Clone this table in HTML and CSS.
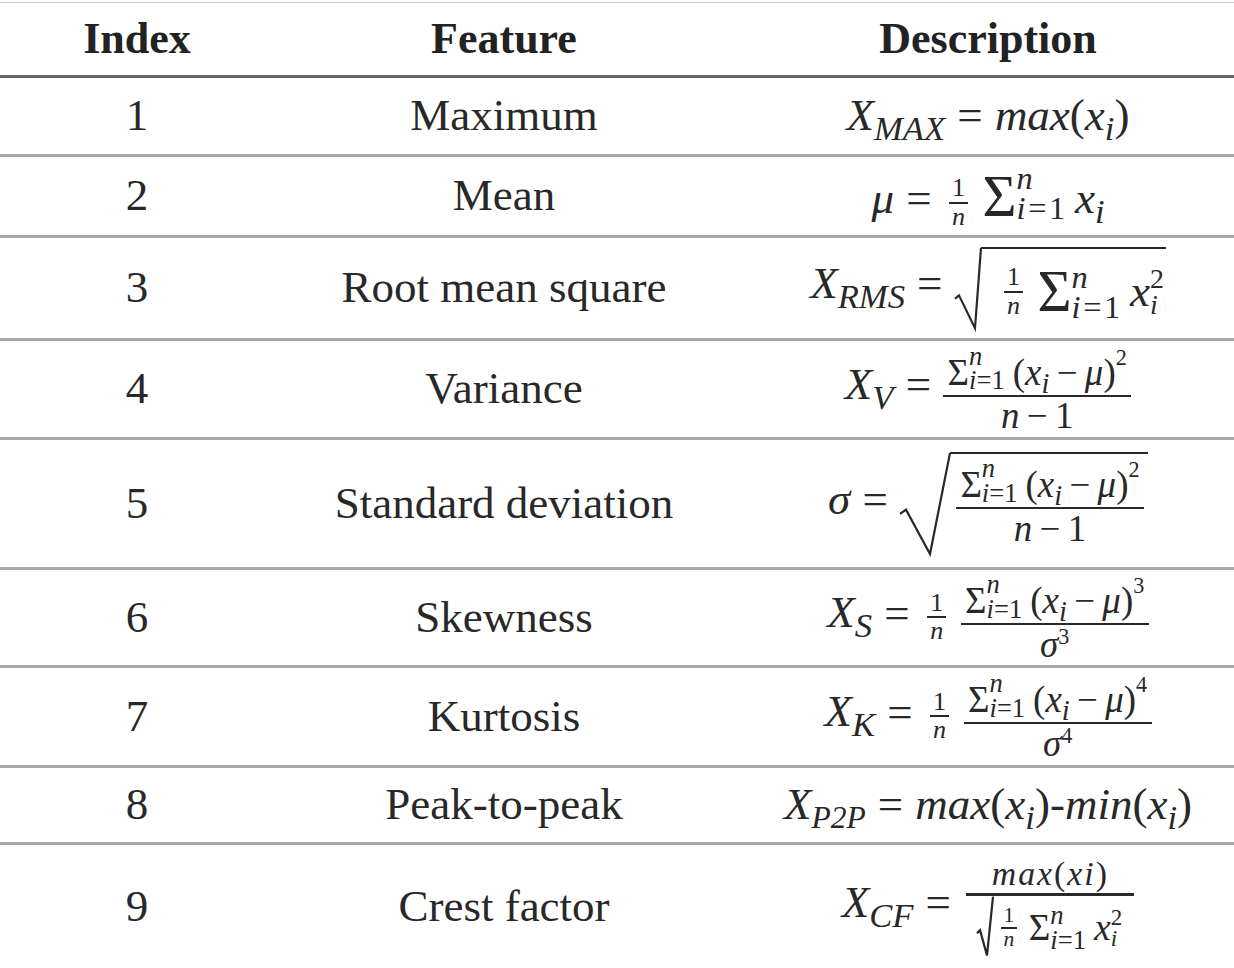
FILE: index.html
```html
<!DOCTYPE html>
<html lang="en">
<head>
<meta charset="utf-8">
<title>Features</title>
<link rel="stylesheet" href="styles.css">
</head>
<body>
<div class="table">
  <div class="row head">
    <div class="cell">Index</div>
    <div class="cell">Feature</div>
    <div class="cell c3">Description</div>
  </div>

  <div class="row r1">
    <div class="cell">1</div>
    <div class="cell">Maximum</div>
    <div class="cell c3"><span class="m">X<sub>MAX</sub><span class="eq">=</span>max<span class="up">(</span>x<sub>i</sub><span class="up">)</span></span></div>
  </div>

  <div class="row r2">
    <div class="cell">2</div>
    <div class="cell">Mean</div>
    <div class="cell c3"><span class="m">μ<span class="eq">=</span><span class="sfrac"><span class="up">1</span><span>n</span></span><span class="sum">Σ</span><span class="lim"><span>n</span><span>i<span class="up leq">=</span><span class="up">1</span></span></span>x<sub>i</sub></span></div>
  </div>

  <div class="row r3">
    <div class="cell">3</div>
    <div class="cell">Root mean square</div>
    <div class="cell c3"><span class="m">X<sub>RMS</sub><span class="eq">=</span><span class="sqrt"><svg class="rad rad-md" viewBox="0 0 26 100" preserveAspectRatio="none"><path d="M0 63 L4 59 L20 99 L26 1"/></svg><span class="radicand rc3"><span class="sfrac"><span class="up">1</span><span>n</span></span><span class="sum">Σ</span><span class="lim"><span>n</span><span>i<span class="up leq">=</span><span class="up">1</span></span></span>x<span class="ss"><span class="up">2</span><span>i</span></span></span></span></span></div>
  </div>

  <div class="row r4">
    <div class="cell">4</div>
    <div class="cell">Variance</div>
    <div class="cell c3"><span class="m">X<sub>V</sub><span class="eq">=</span><span class="frac"><span class="num"><span class="sum sm">Σ</span><span class="lim"><span>n</span><span>i<span class="up">=1</span></span></span><span class="up">(</span>x<sub>i</sub><span class="op">−</span>μ<span class="up">)</span><sup class="up">2</sup></span><span class="den">n<span class="op up">−</span><span class="up">1</span></span></span></span></div>
  </div>

  <div class="row r5">
    <div class="cell">5</div>
    <div class="cell">Standard deviation</div>
    <div class="cell c3"><span class="m">σ<span class="eq">=</span><span class="sqrt"><svg class="rad rad-lg" viewBox="0 0 50 100" preserveAspectRatio="none"><path d="M0 60 L6 56 L30 99 L50 1"/></svg><span class="radicand rc5"><span class="frac"><span class="num"><span class="sum sm">Σ</span><span class="lim"><span>n</span><span>i<span class="up">=1</span></span></span><span class="up">(</span>x<sub>i</sub><span class="op">−</span>μ<span class="up">)</span><sup class="up">2</sup></span><span class="den">n<span class="op up">−</span><span class="up">1</span></span></span></span></span></span></div>
  </div>

  <div class="row r6">
    <div class="cell">6</div>
    <div class="cell">Skewness</div>
    <div class="cell c3"><span class="m">X<sub>S</sub><span class="eq">=</span><span class="sfrac"><span class="up">1</span><span>n</span></span><span class="frac"><span class="num"><span class="sum sm">Σ</span><span class="lim"><span>n</span><span>i<span class="up">=1</span></span></span><span class="up">(</span>x<sub>i</sub><span class="op">−</span>μ<span class="up">)</span><sup class="up">3</sup></span><span class="den">σ<sup class="up lo">3</sup></span></span></span></div>
  </div>

  <div class="row r7">
    <div class="cell">7</div>
    <div class="cell">Kurtosis</div>
    <div class="cell c3"><span class="m">X<sub>K</sub><span class="eq">=</span><span class="sfrac"><span class="up">1</span><span>n</span></span><span class="frac"><span class="num"><span class="sum sm">Σ</span><span class="lim"><span>n</span><span>i<span class="up">=1</span></span></span><span class="up">(</span>x<sub>i</sub><span class="op">−</span>μ<span class="up">)</span><sup class="up">4</sup></span><span class="den">σ<sup class="up lo">4</sup></span></span></span></div>
  </div>

  <div class="row r8">
    <div class="cell">8</div>
    <div class="cell">Peak-to-peak</div>
    <div class="cell c3"><span class="m">X<sub class="narrow">P2P</sub><span class="eq">=</span>max<span class="up">(</span>x<sub>i</sub><span class="up">)</span>-min<span class="up">(</span>x<sub>i</sub><span class="up">)</span></span></div>
  </div>

  <div class="row r9">
    <div class="cell">9</div>
    <div class="cell">Crest factor</div>
    <div class="cell c3"><span class="m">X<sub>CF</sub><span class="eq">=</span><span class="frac cf"><span class="num spaced">max<span class="up">(</span>xi<span class="up">)</span></span><span class="den"><span class="sqrt"><svg class="rad rad-sm" viewBox="0 0 16 100" preserveAspectRatio="none"><path d="M0 62 L3 57 L10 99 L16 1"/></svg><span class="radicand rc9"><span class="sfrac"><span class="up">1</span><span>n</span></span><span class="sum sm">Σ</span><span class="lim"><span>n</span><span>i<span class="up">=1</span></span></span>x<span class="ss"><span class="up">2</span><span>i</span></span></span></span></span></span></span></div>
  </div>
</div>
</body>
</html>
```

FILE: styles.css
```css
* { box-sizing: border-box; }

html, body {
  margin: 0;
  padding: 0;
  background: #ffffff;
}

body {
  font-family: "Liberation Serif", "Times New Roman", serif;
  color: #282828;
}

.table {
  margin-top: 2px;
  border-top: 1px solid #cfcfcf;
  width: 1234px;
}

.row {
  display: grid;
  grid-template-columns: 274px 460px 1fr;
  align-items: center;
  border-bottom: 3px solid #a9a9a9;
  font-size: 45px;
  line-height: 1.1;
}

.cell {
  text-align: center;
  white-space: nowrap;
}

.c3 { padding-left: 8px; }

.head {
  height: 75px;
  font-size: 44px;
  font-weight: bold;
  color: #222;
  border-bottom-color: #666666;
}

.r1 { height: 79px; }
.r2 { height: 81px; }
.r3 { height: 103px; }
.r4 { height: 99px; }
.r5 { height: 130px; }
.r6 { height: 98px; }
.r7 { height: 100px; }
.r8 { height: 77px; }
.r9 { height: 123px; border-bottom: none; }

/* ---- math ---- */
.m {
  font-style: italic;
  white-space: nowrap;
  display: inline-block;
}

.m sub {
  font-size: 0.77em;
  vertical-align: -0.28em;
  line-height: 0;
}

.m sub.narrow { font-size: 0.7em; }

.m sup {
  font-size: 0.6em;
  vertical-align: 0.9em;
  line-height: 0;
}

.m sup.lo { vertical-align: 0.6em; }

.up { font-style: normal; }

.eq {
  font-style: normal;
  margin: 0 0.27em;
}

.op {
  font-style: normal;
  margin: 0 0.2em;
}

.leq { margin: 0 0.08em; }

.sfrac {
  display: inline-flex;
  flex-direction: column;
  align-items: center;
  font-size: 0.58em;
  line-height: 1.02;
  vertical-align: middle;
  margin: 0 0.55em 0 0.2em;
}

.sfrac > :first-child {
  border-bottom: 2px solid #282828;
  padding: 0 0.12em;
}

.sum {
  font-style: normal;
  font-size: 1.3em;
  line-height: 1;
  vertical-align: -0.06em;
}

.sum.sm { font-size: 1em; vertical-align: 0; }

.lim {
  display: inline-flex;
  flex-direction: column;
  align-items: flex-start;
  font-size: 0.72em;
  line-height: 1;
  vertical-align: 0.74em;
  margin-right: 0.3em;
}

.lim > :first-child { margin-bottom: -0.08em; }

.ss {
  display: inline-flex;
  flex-direction: column;
  align-items: flex-start;
  font-size: 0.62em;
  line-height: 1;
  vertical-align: 0.78em;
}

.ss > :first-child { margin-bottom: -0.05em; }

.frac {
  display: inline-flex;
  flex-direction: column;
  align-items: center;
  vertical-align: middle;
  font-size: 0.82em;
  line-height: 1.02;
}

.frac .num {
  border-bottom: 2px solid #282828;
  padding: 0 0.12em 0.02em;
}

.frac .den {
  padding-top: 0.02em;
}

.frac.cf { font-size: 0.75em; margin-left: 0.1em; }
.frac.cf .num { padding: 0 0.75em 0.05em; border-bottom-width: 3px; }
.frac.cf .den { padding-top: 0; }
.spaced { letter-spacing: 0.06em; }

.sqrt {
  display: inline-flex;
  vertical-align: middle;
}

.rad {
  flex: none;
  display: block;
  overflow: visible;
}

.rad path {
  fill: none;
  stroke: #282828;
  stroke-width: 2.2;
  stroke-linejoin: miter;
  vector-effect: non-scaling-stroke;
}

.rad-md { width: 26px; height: 82px; }
.rad-lg { width: 50px; height: 103px; }
.rad-sm { width: 16px; height: 60px; }

.radicand {
  display: inline-flex;
  align-items: center;
  border-top: 2px solid #282828;
  line-height: 1.1;
}

.rc3 { padding: 6px 2px 0 18px; }
.rc5 { padding: 0 4px 6px 6px; }
.rc9 { padding: 4px 2px 0 4px; border-top: none; font-size: 1.1em; }
```
